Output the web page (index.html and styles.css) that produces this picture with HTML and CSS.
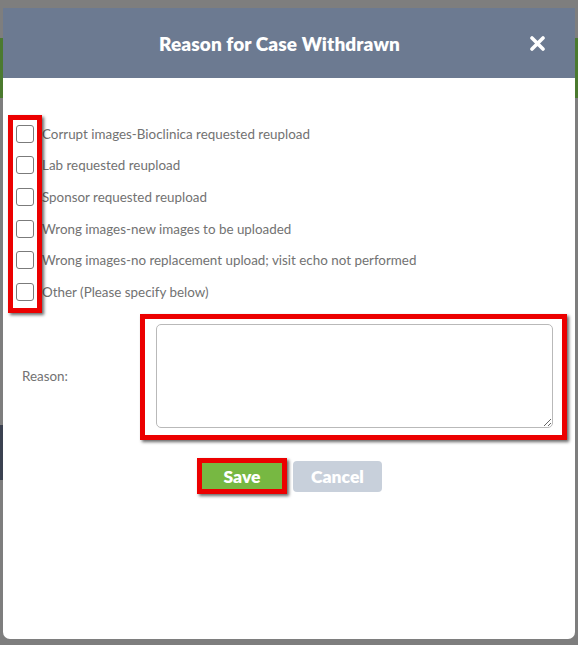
FILE: index.html
```html
<!DOCTYPE html>
<html>
<head>
<meta charset="utf-8">
<link rel="stylesheet" href="styles.css">
</head>
<body>
<div class="page">
  <div class="page-band"></div>
  <div class="page-dark"></div>
</div>
<div class="backdrop"></div>
<div class="modal">
  <div class="modal-header">
    <h1 class="modal-title">Reason for Case Withdrawn</h1>
    <span class="close" aria-label="Close">
      <svg width="15" height="15" viewBox="0 0 15 15"><path d="M2 2 L13 13 M13 2 L2 13" stroke="#fff" stroke-width="3.6" stroke-linecap="round"/></svg>
    </span>
  </div>
  <div class="modal-body">
    <ul class="reasons">
      <li class="reason"><span class="cb"></span><span class="lbl">Corrupt images-Bioclinica requested reupload</span></li>
      <li class="reason"><span class="cb"></span><span class="lbl">Lab requested reupload</span></li>
      <li class="reason"><span class="cb"></span><span class="lbl">Sponsor requested reupload</span></li>
      <li class="reason"><span class="cb"></span><span class="lbl">Wrong images-new images to be uploaded</span></li>
      <li class="reason"><span class="cb"></span><span class="lbl">Wrong images-no replacement upload; visit echo not performed</span></li>
      <li class="reason"><span class="cb"></span><span class="lbl">Other (Please specify below)</span></li>
    </ul>
    <div class="reason-row">
      <label class="reason-label">Reason:</label>
      <textarea class="reason-text"></textarea>
    </div>
    <div class="actions">
      <button class="btn btn-save">Save</button>
      <button class="btn btn-cancel">Cancel</button>
    </div>
  </div>
  <div class="mark mark-cb"></div>
  <div class="mark mark-text"></div>
  <div class="mark mark-save"></div>
</div>
</body>
</html>
```
FILE: styles.css
```css
html, body {
  margin: 0;
  padding: 0;
}
body {
  width: 578px;
  height: 645px;
  overflow: hidden;
  background: #7e7e7e;
  font-family: Lato, "Open Sans", "Liberation Sans", sans-serif;
  position: relative;
}
.page {
  display: flex;
  flex-direction: column;
  padding-top: 38px;
}
.page-band {
  height: 60px;
  background: #4b7a2f;
}
.page-dark {
  margin-top: 327px;
  height: 55px;
  width: 4px;
  background: #3b4150;
}
.backdrop {
  position: absolute;
  inset: 0;
}
.modal {
  position: absolute;
  left: 3px;
  top: 8px;
  width: 572px;
  height: 631px;
  background: #fff;
  border-radius: 0 0 7px 7px;
  display: flex;
  flex-direction: column;
}
.modal-header {
  height: 70px;
  background: #6c7a91;
  display: flex;
  align-items: center;
  padding: 0 30px 0 26px;
  flex-shrink: 0;
}
.modal-title {
  flex: 1;
  margin: 0;
  text-align: center;
  color: #fff;
  font-size: 19px;
  font-weight: 800;
  letter-spacing: 0.1px;
}
.close {
  width: 15px;
  height: 15px;
  display: flex;
}
.modal-body {
  padding: 40px 0 0 0;
  display: flex;
  flex-direction: column;
}
.reasons {
  list-style: none;
  margin: 0;
  padding: 0 0 0 13px;
}
.reason {
  height: 31.6px;
  display: flex;
  align-items: center;
  gap: 8px;
}
.cb {
  width: 16px;
  height: 16px;
  border: 1px solid #7b7b7b;
  border-radius: 3px;
  background: #fff;
  flex-shrink: 0;
}
.lbl {
  font-size: 13.4px;
  color: #727272;
}
.reason-row {
  display: flex;
  align-items: center;
  margin-top: 16px;
  padding-left: 19px;
}
.reason-label {
  width: 134px;
  font-size: 13.4px;
  color: #727272;
}
.reason-text {
  width: 397px;
  height: 104px;
  box-sizing: border-box;
  border: 1px solid #b9b9b9;
  border-radius: 5px;
  resize: both;
  font-family: inherit;
  margin: 0;
}
.actions {
  display: flex;
  justify-content: center;
  gap: 9px;
  margin-top: 33px;
  padding-left: 4px;
}
.btn {
  height: 31px;
  border: none;
  border-radius: 4px;
  color: #fff;
  font-family: inherit;
  font-size: 17.5px;
  font-weight: 800;
  padding: 0;
}
.btn-save {
  width: 84px;
  background: #77b842;
}
.btn-cancel {
  width: 89px;
  background: #c8d0db;
}
.mark {
  position: absolute;
  border: 5px solid #ec0000;
  box-sizing: border-box;
  box-shadow: 2px 2px 3px rgba(0, 0, 0, 0.6);
}
.mark-cb {
  left: 5px;
  top: 107px;
  width: 34px;
  height: 198px;
}
.mark-text {
  left: 137px;
  top: 306px;
  width: 427px;
  height: 126px;
}
.mark-save {
  left: 194px;
  top: 450px;
  width: 90px;
  height: 36px;
}
```
